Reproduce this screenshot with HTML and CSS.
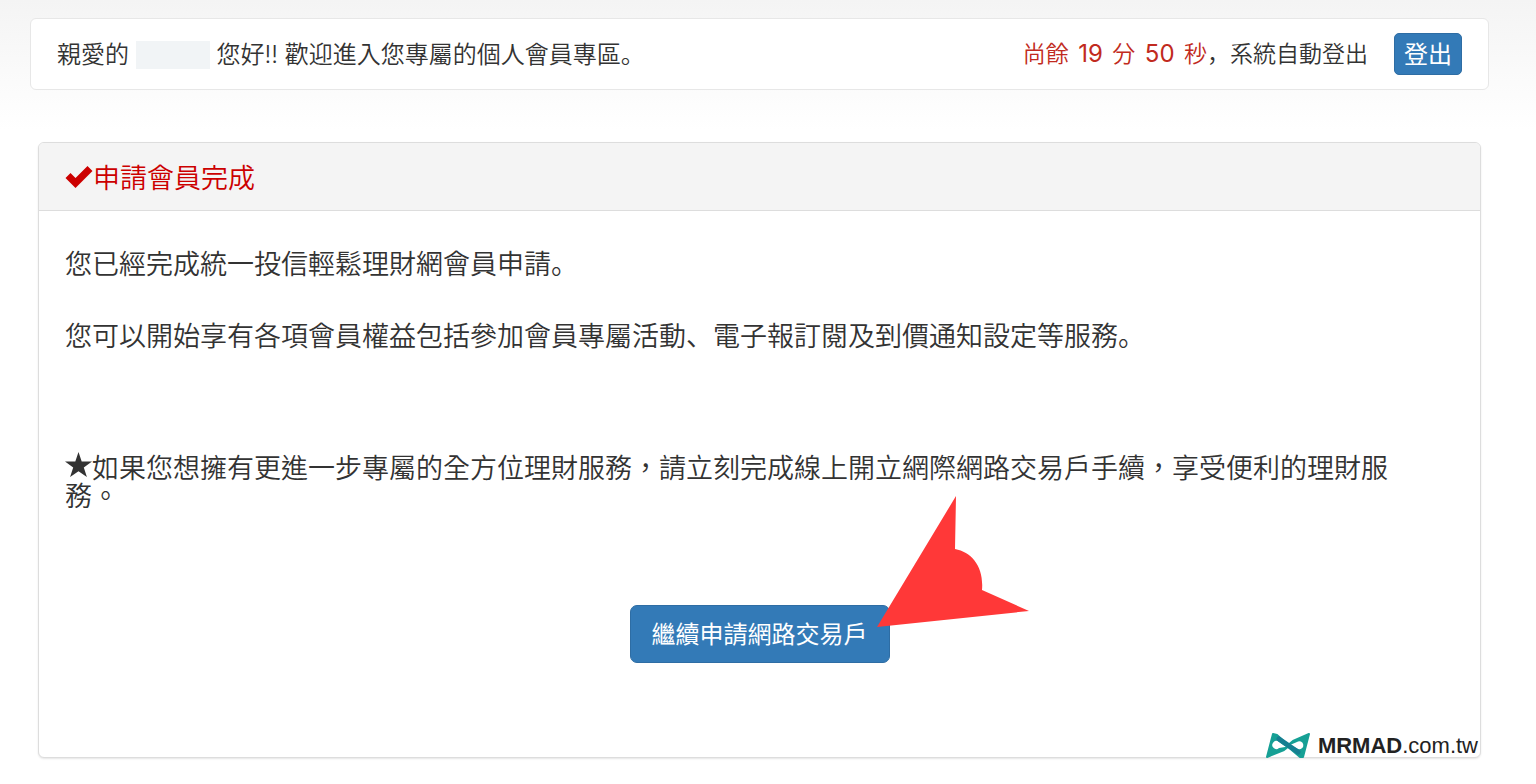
FILE: index.html
```html
<!DOCTYPE html>
<html lang="zh-Hant">
<head>
  <meta charset="UTF-8" />
  <meta name="viewport" content="width=device-width, initial-scale=1.0" />
  <title>申請會員完成</title>
  <link rel="stylesheet" href="styles.css">
</head>
<body>
  <div class="container">
    <header class="topbar">
      <p class="welcome">親愛的 <span class="name"></span> 您好!! 歡迎進入您專屬的個人會員專區。</p>
      <div class="session">
        <p class="timer"><span class="remain">尚餘 <span class="num">19</span> 分 <span class="num">50</span> 秒</span>&#65292;系統自動登出</p>
        <button type="button" class="btn">登出</button>
      </div>
    </header>

    <main class="panel">
      <h1 class="panel-heading">
        <svg class="icon-ok" viewBox="0 0 27 24" aria-hidden="true"><path d="M0 13 L5 8 L10 13 L22 1 L27 6 L10 23 Z" /></svg>申請會員完成
      </h1>
      <div class="panel-body">
        <p>您已經完成統一投信輕鬆理財網會員申請。</p>
        <p>您可以開始享有各項會員權益包括參加會員專屬活動、電子報訂閱及到價通知設定等服務。</p>
        <p class="note"><svg class="icon-star" viewBox="0 0 27 26" aria-hidden="true"><path d="M13.5 0 L16.7 9.4 H27 L18.8 15.4 L21.9 25 L13.5 19.2 L5.1 25 L8.2 15.4 L0 9.4 H10.3 Z" /></svg>如果您想擁有更進一步專屬的全方位理財服務&#65292;請立刻完成線上開立網際網路交易戶手續&#65292;享受便利的理財服務。</p>
        <div class="action">
          <button type="button" class="btn btn-lg">繼續申請網路交易戶</button>
          <svg class="pointer" viewBox="0 0 153 132" aria-hidden="true"><path d="M0 131 L79 0 L78 53 C95 56 107 71 105 94 L152 115 Z" /></svg>
        </div>
      </div>
      <div class="brand">
        <svg class="brand-logo" viewBox="0 0 46 27" aria-hidden="true">
          <path d="M8 2 L2 25 L19 18 L24 14 L12 3 Z" class="logo-fill" />
          <path d="M44 2 L38 25 L35 25 L22 14 L28 9 Z" class="logo-fill" />
          <path d="M21 15 L14 10 A4 4 0 1 0 14 16 L20 15 Z" class="logo-hole" />
          <path d="M25 13 L32 10 A4 4 0 1 1 33 17 Z" class="logo-hole" />
          <path d="M14 7 L33 20" class="logo-cross" />
        </svg>
        <span><b>MRMAD</b>.com.tw</span>
      </div>
    </main>
  </div>
</body>
</html>
```
FILE: styles.css
```css
body {
  margin: 0;
  color: #333;
  font-family: Inter, "Noto Sans CJK JP", "Noto Sans CJK TC", sans-serif;
  font-size: 27px;
  font-weight: 350;
  font-feature-settings: "locl" 0;
  background: #fff linear-gradient(#f4f4f4, #fff 130px) no-repeat;
}
.container {
  padding: 18px 47px 26px 30px;
}
p {
  margin: 0;
}
.topbar {
  display: flex;
  justify-content: space-between;
  align-items: center;
  min-height: 70px;
  padding: 0 26px;
  border: 1px solid #e7e7e7;
  border-radius: 6px;
  background-color: #fff;
  font-size: 24px;
}
.welcome,
.timer {
  padding-bottom: 4px;
}
.name {
  display: inline-block;
  width: 74px;
  height: 28px;
  background-color: #f1f4f6;
  vertical-align: text-bottom;
}
.session {
  display: flex;
  align-items: center;
  gap: 26px;
}
.timer {
  font-size: 23px;
}
.remain {
  color: #c12a20;
}
.num {
  margin: 0 3px;
  font-size: 24px;
  font-weight: 400;
}
.btn {
  height: 42px;
  padding: 2px 9px 0;
  border: 1px solid #2e6da4;
  border-radius: 5px;
  background-color: #337ab7;
  color: #fff;
  font-family: inherit;
  font-size: 24px;
  line-height: 38px;
  cursor: pointer;
}
.btn:hover {
  background-color: #286090;
}
.btn-lg {
  height: 58px;
  padding: 2px 21px 0;
  border-radius: 7px;
}
.panel {
  position: relative;
  margin: 52px 8px 0;
  border: 1px solid #ddd;
  border-radius: 6px;
  background-color: #fff;
  box-shadow: 0 1px 2px rgba(0,0,0,0.1);
}
.panel-heading {
  display: flex;
  align-items: center;
  height: 67px;
  margin: 0;
  padding: 0 26px;
  border-bottom: 1px solid #ddd;
  border-radius: 5px 5px 0 0;
  background-color: #f4f4f4;
  color: #c00;
  font-size: 27px;
  font-weight: 350;
}
.icon-ok {
  width: 28px;
  height: 24px;
  fill: #c00;
}
.panel-body {
  padding: 40px 26px 94px;
  line-height: 28px;
}
.panel-body p {
  margin-bottom: 44px;
}
.panel-body .note {
  margin: 101px 0 96px;
  padding-right: 40px;
  font-family: "Noto Sans CJK TC", sans-serif;
}
.icon-star {
  width: 27px;
  height: 26px;
  fill: #333;
}
.action {
  position: relative;
  width: fit-content;
  margin: 0 auto;
}
.action .btn {
  display: block;
}
.pointer {
  position: absolute;
  left: 247px;
  bottom: 35px;
  width: 153px;
  height: 132px;
  fill: #ff3838;
}
.brand {
  position: absolute;
  right: 2px;
  bottom: -2px;
  display: flex;
  align-items: center;
  gap: 7px;
  color: #222;
  font-family: "Liberation Sans", Arial, sans-serif;
  font-size: 22px;
}
.brand-logo {
  width: 46px;
  height: 27px;
}
.logo-fill {
  fill: #16a095;
  stroke: #16a095;
  stroke-width: 2;
  stroke-linejoin: round;
}
.logo-hole {
  fill: #fff;
}
.logo-cross {
  fill: none;
  stroke: #167f91;
  stroke-width: 5;
  stroke-linecap: round;
}
```
